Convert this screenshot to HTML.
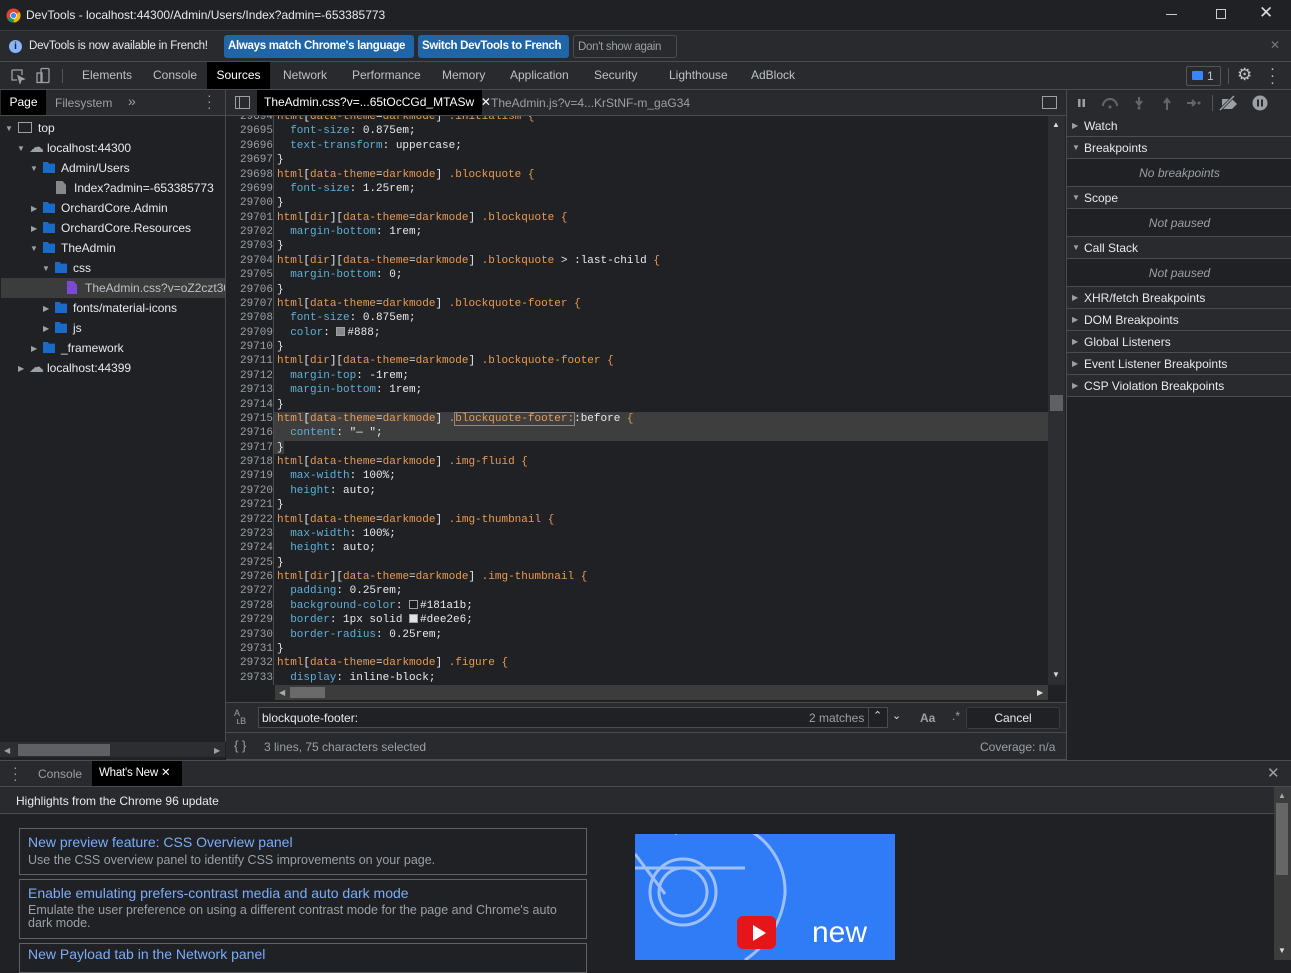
<!DOCTYPE html>
<html><head><meta charset="utf-8"><style>
*{box-sizing:border-box;margin:0;padding:0}
body{width:1291px;height:960px;overflow:hidden;background:#202124;font-family:"Liberation Sans",sans-serif;font-size:12px;color:#e8eaed;position:relative;white-space:nowrap}
.a{position:absolute}
.title{left:0;top:0;width:1291px;height:31px;background:#202124;border-bottom:1px solid #3c3c3c}
.info{left:0;top:31px;width:1291px;height:31px;background:#292a2d;border-bottom:1px solid #494c50}
.btn{position:absolute;top:4px;height:23px;line-height:23px;padding:0 4px;border-radius:3px;font-size:11.5px;letter-spacing:-0.3px;white-space:nowrap;overflow:hidden}
.tabs{left:0;top:62px;width:1291px;height:28px;background:#292a2d;border-bottom:1px solid #494c50}
.tabs span{position:absolute;top:0;height:27px;line-height:27px;color:#bdc1c6}
.sub{top:90px;height:26px;background:#292a2d;border-bottom:1px solid #494c50}
.tree{left:0;top:116px;width:226px;height:626px;background:#202124;border-right:1px solid #494c50}
.tr{position:absolute;height:20px;line-height:20px;font-size:12px;white-space:nowrap}
.fold{display:inline-block;width:12px;height:11px;background:#1a6bc6;vertical-align:-1px;margin-right:6px;clip-path:polygon(0 0,40% 0,50% 15%,100% 15%,100% 100%,0 100%)}
.ar{position:absolute;font-size:8px;color:#9aa0a6}
.code{left:226px;top:116px;width:822px;height:569px;overflow:hidden;background:#202124}
.ln{position:absolute;left:0;width:47px;text-align:right;color:#9aa0a6;font:11px/14.38px "Liberation Mono",monospace}
.cl{position:absolute;left:51px;white-space:pre;font:11px/14.38px "Liberation Mono",monospace;color:#e8eaed}
.o{color:#e99a52}.p{color:#5db0d7}
.sw{display:inline-block;width:9px;height:9px;border:1px solid #9aa0a6;vertical-align:-1px;margin-right:2px}
.rp{left:1066px;top:116px;width:225px;height:644px;background:#202124;border-left:1px solid #494c50}
.sec{position:absolute;left:0;width:225px;height:22px;line-height:22px;background:#292a2d;border-bottom:1px solid #494c50;padding-left:17px;font-size:12px}
.sec i{position:absolute;left:5px;font-style:normal;font-size:8px;color:#9aa0a6}
.emp{position:absolute;left:0;width:225px;height:28px;line-height:28px;text-align:center;font-style:italic;color:#9aa0a6;border-bottom:1px solid #494c50}
.card{position:absolute;left:19px;width:568px;border:1px solid #5f6368;padding:5px 8px;white-space:normal;overflow:hidden}
.card b{display:block;font-weight:normal;color:#7cacf8;font-size:14px;line-height:17px}
.card p{color:#9aa0a6;font-size:12.5px;line-height:11px;margin-top:3px}
</style></head><body>
<div class="a title">
<svg class="a" style="left:6px;top:8px" width="15" height="15" viewBox="0 0 16 16"><circle cx="8" cy="8" r="7.5" fill="#db4437"/><path d="M8 8 L1.5 11.7 A7.5 7.5 0 0 0 8.3 15.5Z" fill="#0f9d58"/><path d="M8 8 L8.3 15.5 A7.5 7.5 0 0 0 14.5 4.2Z" fill="#f4b400"/><circle cx="8" cy="8" r="3.6" fill="#fff"/><circle cx="8" cy="8" r="2.8" fill="#4285f4"/></svg>
<div class="a" style="left:26px;top:8px;font-size:12px;color:#e8eaed">DevTools - localhost:44300/Admin/Users/Index?admin=-653385773</div>
<div class="a" style="left:1166px;top:14px;width:11px;height:1px;background:#ccc"></div>
<div class="a" style="left:1216px;top:9px;width:10px;height:10px;border:1px solid #ccc"></div>
<div class="a" style="left:1259px;top:3px;font-size:17px;color:#ddd">✕</div>
</div>
<div class="a info">
<div class="a" style="left:9px;top:9px;width:13px;height:13px;border-radius:50%;background:#8ab4f8;color:#202124;font-size:10px;font-weight:bold;text-align:center;line-height:13px">i</div>
<div class="a" style="left:29px;top:9px;font-size:11.5px;letter-spacing:-0.2px">DevTools is now available in French!</div>
<div class="btn" style="left:224px;background:#2065a8;color:#fff;font-weight:bold;width:190px">Always match Chrome's language</div>
<div class="btn" style="left:418px;background:#2065a8;color:#fff;font-weight:bold;width:151px">Switch DevTools to French</div>
<div class="btn" style="left:573px;border:1px solid #4a4c50;color:#9aa0a6;width:104px">Don't show again</div>
<div class="a" style="left:1270px;top:7px;color:#777;font-size:12px">✕</div>
</div>
<div class="a tabs">
<svg class="a" style="left:10px;top:6px" width="16" height="16" viewBox="0 0 16 16" fill="none" stroke="#9aa0a6" stroke-width="1.3"><path d="M2 2h10v5M2 2v10h5"/><path d="M8 8l6 3-3 1-1 3z" fill="#9aa0a6"/></svg>
<svg class="a" style="left:35px;top:5px" width="16" height="17" viewBox="0 0 16 17" fill="none" stroke="#9aa0a6" stroke-width="1.3"><rect x="6" y="1.5" width="8" height="14" rx="1"/><rect x="2" y="6" width="5" height="9.5"/></svg>
<div class="a" style="left:62px;top:7px;width:1px;height:14px;background:#555"></div>
<span style="left:82px">Elements</span><span style="left:153px">Console</span>
<span style="left:207px;width:63px;background:#000;color:#fff;text-align:center">Sources</span>
<span style="left:283px">Network</span><span style="left:352px">Performance</span><span style="left:442px">Memory</span><span style="left:510px">Application</span><span style="left:594px">Security</span><span style="left:669px">Lighthouse</span><span style="left:751px">AdBlock</span>
<div class="a" style="left:1186px;top:4px;width:35px;height:20px;border:1px solid #555;border-radius:2px"></div>
<div class="a" style="left:1192px;top:9px;width:11px;height:9px;background:#3a85ff;border-radius:1px"></div>
<div class="a" style="left:1207px;top:7px;color:#bdc1c6">1</div>
<div class="a" style="left:1228px;top:6px;width:1px;height:16px;background:#555"></div>
<div class="a" style="left:1237px;top:3px;font-size:17px;color:#bdc1c6">⚙</div>
<div class="a" style="left:1270px;top:3px;font-size:15px;color:#bdc1c6;line-height:7px">·<br>·<br>·</div>
</div>
<!-- left subtabs -->
<div class="a sub" style="left:0;width:226px;border-right:1px solid #494c50">
<div class="a" style="left:1px;top:0;width:45px;height:25px;background:#000;line-height:25px;text-align:center;color:#fff">Page</div>
<div class="a" style="left:55px;top:6px;color:#9aa0a6">Filesystem</div>
<div class="a" style="left:128px;top:3px;color:#9aa0a6;font-size:14px">»</div>
<div class="a" style="left:207px;top:2px;color:#9aa0a6;font-size:14px;line-height:6px">·<br>·<br>·</div>
</div>
<div class="a sub" style="left:226px;width:840px">
<div class="a" style="left:9px;top:6px;width:15px;height:13px;border:1px solid #9aa0a6"></div><div class="a" style="left:13px;top:6px;width:1px;height:13px;background:#9aa0a6"></div>
<div class="a" style="left:31px;top:0;width:225px;height:25px;background:#000;line-height:25px;padding-left:7px;color:#fff">TheAdmin.css?v=...65tOcCGd_MTASw &nbsp;✕</div>
<div class="a" style="left:265px;top:6px;color:#9aa0a6">TheAdmin.js?v=4...KrStNF-m_gaG34</div>
<div class="a" style="left:816px;top:6px;width:15px;height:13px;border:1px solid #9aa0a6"></div>
</div>
<div class="a sub" style="left:1066px;width:225px;border-left:1px solid #494c50">
<svg class="a" style="left:8px;top:5px" width="200" height="16" viewBox="0 0 200 16">
<rect x="3" y="4" width="2.5" height="8" fill="#9aa0a6"/><rect x="7.5" y="4" width="2.5" height="8" fill="#9aa0a6"/>
<path d="M28 11 A7 7 0 0 1 42 11" stroke="#666" stroke-width="2" fill="none"/><circle cx="35" cy="12" r="1.5" fill="#666"/>
<path d="M64 2v7M61 6l3 4 3-4" stroke="#666" stroke-width="2" fill="none"/><circle cx="64" cy="13" r="1.5" fill="#666"/>
<path d="M92 13V6M89 8l3-4 3 4" stroke="#666" stroke-width="2" fill="none"/><circle cx="92" cy="14" r="1.2" fill="#666"/>
<path d="M112 8h8M117 5l3 3-3 3" stroke="#666" stroke-width="2" fill="none"/><circle cx="124" cy="8" r="1.5" fill="#666"/>
<rect x="137" y="0" width="1" height="16" fill="#555"/>
<path d="M147 4h10l5 5-5 5h-10z" fill="#9aa0a6"/><path d="M145 15l14-14" stroke="#292a2d" stroke-width="3"/><path d="M145 15l14-14" stroke="#9aa0a6" stroke-width="1.5"/>
<circle cx="185" cy="8" r="7.5" fill="#9aa0a6"/><rect x="182" y="4.5" width="2" height="7" fill="#292a2d"/><rect x="186" y="4.5" width="2" height="7" fill="#292a2d"/>
</svg>
</div>
<!-- tree -->
<div class="a tree">
<span class="ar" style="left:5px;top:8px">▼</span><div class="tr" style="left:18px;top:2px"><span style="display:inline-block;width:14px;height:11px;border:1.5px solid #9aa0a6;vertical-align:-1px;margin-right:6px"></span>top</div>
<span class="ar" style="left:17px;top:28px">▼</span><div class="tr" style="left:29px;top:22px"><span style="color:#9aa0a6;font-size:15px;margin-right:3px">☁</span>localhost:44300</div>
<span class="ar" style="left:30px;top:48px">▼</span><div class="tr" style="left:43px;top:42px"><span class="fold"></span>Admin/Users</div>
<div class="tr" style="left:56px;top:62px"><span style="display:inline-block;width:10px;height:13px;background:#888;vertical-align:-2px;margin-right:8px;clip-path:polygon(0 0,65% 0,100% 30%,100% 100%,0 100%)"></span>Index?admin=-653385773</div>
<span class="ar" style="left:31px;top:88px">▶</span><div class="tr" style="left:43px;top:82px"><span class="fold"></span>OrchardCore.Admin</div>
<span class="ar" style="left:31px;top:108px">▶</span><div class="tr" style="left:43px;top:102px"><span class="fold"></span>OrchardCore.Resources</div>
<span class="ar" style="left:30px;top:128px">▼</span><div class="tr" style="left:43px;top:122px"><span class="fold"></span>TheAdmin</div>
<span class="ar" style="left:42px;top:148px">▼</span><div class="tr" style="left:55px;top:142px"><span class="fold"></span>css</div>
<div class="a" style="left:1px;top:162px;width:224px;height:20px;background:#3c3c3c"></div>
<div class="tr" style="left:67px;top:162px;color:#bdc1c6;width:158px;overflow:hidden"><span style="display:inline-block;width:10px;height:13px;background:#7a4bd0;vertical-align:-2px;margin-right:8px;clip-path:polygon(0 0,65% 0,100% 30%,100% 100%,0 100%)"></span>TheAdmin.css?v=oZ2czt30</div>
<span class="ar" style="left:43px;top:188px">▶</span><div class="tr" style="left:55px;top:182px"><span class="fold"></span>fonts/material-icons</div>
<span class="ar" style="left:43px;top:208px">▶</span><div class="tr" style="left:55px;top:202px"><span class="fold"></span>js</div>
<span class="ar" style="left:31px;top:228px">▶</span><div class="tr" style="left:43px;top:222px"><span class="fold"></span>_framework</div>
<span class="ar" style="left:18px;top:248px">▶</span><div class="tr" style="left:29px;top:242px"><span style="color:#9aa0a6;font-size:15px;margin-right:3px">☁</span>localhost:44399</div>
<div class="a" style="left:0;top:626px;width:225px;height:15px;background:#2d2e31"></div>
<div class="a" style="left:18px;top:628px;width:92px;height:12px;background:#5f6063"></div>
<span class="ar" style="left:4px;top:630px">◀</span><span class="ar" style="left:214px;top:630px">▶</span>
</div>
<!-- code -->
<div class="a code">
<div class="a" style="left:0;top:0;width:48px;height:569px;border-right:1px solid #494c50"></div>
<div class="a" style="left:48px;top:296px;width:774px;height:29px;background:#3e3e3e"></div>
<div class="a" style="left:48px;top:324px;width:10px;height:14px;background:#3e3e3e"></div>
<div class="a" style="left:0;top:-6px;width:822px">
<div class="ln" style="top:0">29694<br>29695<br>29696<br>29697<br>29698<br>29699<br>29700<br>29701<br>29702<br>29703<br>29704<br>29705<br>29706<br>29707<br>29708<br>29709<br>29710<br>29711<br>29712<br>29713<br>29714<br>29715<br>29716<br>29717<br>29718<br>29719<br>29720<br>29721<br>29722<br>29723<br>29724<br>29725<br>29726<br>29727<br>29728<br>29729<br>29730<br>29731<br>29732<br>29733<br>29734</div>
<div class="cl" style="top:0"><span class="o">html</span>[<span class="o">data-theme</span>=<span class="o">darkmode</span>] <span class="o">.initialism</span> <span class="o">{</span>
  <span class="p">font-size</span>: 0.875em;
  <span class="p">text-transform</span>: uppercase;
}
<span class="o">html</span>[<span class="o">data-theme</span>=<span class="o">darkmode</span>] <span class="o">.blockquote</span> <span class="o">{</span>
  <span class="p">font-size</span>: 1.25rem;
}
<span class="o">html</span>[<span class="o">dir</span>][<span class="o">data-theme</span>=<span class="o">darkmode</span>] <span class="o">.blockquote</span> <span class="o">{</span>
  <span class="p">margin-bottom</span>: 1rem;
}
<span class="o">html</span>[<span class="o">dir</span>][<span class="o">data-theme</span>=<span class="o">darkmode</span>] <span class="o">.blockquote</span> &gt; :last-child <span class="o">{</span>
  <span class="p">margin-bottom</span>: 0;
}
<span class="o">html</span>[<span class="o">data-theme</span>=<span class="o">darkmode</span>] <span class="o">.blockquote-footer</span> <span class="o">{</span>
  <span class="p">font-size</span>: 0.875em;
  <span class="p">color</span>: <span class="sw" style="background:#888"></span>#888;
}
<span class="o">html</span>[<span class="o">dir</span>][<span class="o">data-theme</span>=<span class="o">darkmode</span>] <span class="o">.blockquote-footer</span> <span class="o">{</span>
  <span class="p">margin-top</span>: -1rem;
  <span class="p">margin-bottom</span>: 1rem;
}
<span class="o">html</span>[<span class="o">data-theme</span>=<span class="o">darkmode</span>] <span class="o">.<span style="outline:1px solid #888">blockquote-footer:</span></span>:before <span class="o">{</span>
  <span class="p">content</span>: "— ";
}
<span class="o">html</span>[<span class="o">data-theme</span>=<span class="o">darkmode</span>] <span class="o">.img-fluid</span> <span class="o">{</span>
  <span class="p">max-width</span>: 100%;
  <span class="p">height</span>: auto;
}
<span class="o">html</span>[<span class="o">data-theme</span>=<span class="o">darkmode</span>] <span class="o">.img-thumbnail</span> <span class="o">{</span>
  <span class="p">max-width</span>: 100%;
  <span class="p">height</span>: auto;
}
<span class="o">html</span>[<span class="o">dir</span>][<span class="o">data-theme</span>=<span class="o">darkmode</span>] <span class="o">.img-thumbnail</span> <span class="o">{</span>
  <span class="p">padding</span>: 0.25rem;
  <span class="p">background-color</span>: <span class="sw" style="background:#181a1b"></span>#181a1b;
  <span class="p">border</span>: 1px solid <span class="sw" style="background:#dee2e6"></span>#dee2e6;
  <span class="p">border-radius</span>: 0.25rem;
}
<span class="o">html</span>[<span class="o">data-theme</span>=<span class="o">darkmode</span>] <span class="o">.figure</span> <span class="o">{</span>
  <span class="p">display</span>: inline-block;
</div>
</div>
</div>
<!-- vertical scrollbar -->
<div class="a" style="left:1048px;top:116px;width:17px;height:569px;background:#2d2e31"></div>
<div class="a" style="left:1050px;top:395px;width:13px;height:16px;background:#5f6063"></div>
<div class="a" style="left:1052px;top:120px;font-size:8px;color:#ddd">▲</div>
<div class="a" style="left:1052px;top:670px;font-size:8px;color:#ddd">▼</div>
<!-- h scrollbar -->
<div class="a" style="left:275px;top:685px;width:773px;height:15px;background:#3c3c3c"></div>
<div class="a" style="left:290px;top:687px;width:35px;height:11px;background:#6a6a6a"></div>
<div class="a" style="left:279px;top:688px;font-size:8px;color:#aaa">◀</div>
<div class="a" style="left:1037px;top:688px;font-size:8px;color:#ddd">▶</div>
<!-- search bar -->
<div class="a" style="left:226px;top:702px;width:840px;height:31px;background:#292a2d;border-top:1px solid #494c50;border-bottom:1px solid #494c50">
<div class="a" style="left:8px;top:6px;font-size:9px;color:#9aa0a6;line-height:8px">A<br>&nbsp;ʟB</div>
<div class="a" style="left:32px;top:4px;width:630px;height:21px;background:#202124;border:1px solid #494c50"></div>
<div class="a" style="left:36px;top:8px;color:#e8eaed">blockquote-footer:</div>
<div class="a" style="left:583px;top:8px;color:#9aa0a6">2 matches</div>
<div class="a" style="left:642px;top:4px;width:1px;height:21px;background:#494c50"></div>
<div class="a" style="left:661px;top:4px;width:1px;height:21px;background:#494c50"></div>
<div class="a" style="left:647px;top:6px;color:#ddd;font-size:11px">⌃</div>
<div class="a" style="left:666px;top:6px;color:#ddd;font-size:11px">⌄</div>
<div class="a" style="left:694px;top:8px;color:#9aa0a6;font-weight:bold">Aa</div>
<div class="a" style="left:726px;top:6px;color:#9aa0a6">.*</div>
<div class="a" style="left:740px;top:4px;width:94px;height:22px;border:1px solid #3c3c3c;border-radius:3px;background:#202124;text-align:center;line-height:20px">Cancel</div>
</div>
<div class="a" style="left:226px;top:733px;width:840px;height:27px;background:#292a2d;border-bottom:1px solid #494c50">
<div class="a" style="left:8px;top:5px;color:#9aa0a6;font-size:13px">{ }</div>
<div class="a" style="left:38px;top:7px;color:#9aa0a6">3 lines, 75 characters selected</div>
<div class="a" style="left:754px;top:7px;color:#9aa0a6">Coverage: n/a</div>
</div>
<!-- right panel -->
<div class="a rp">
<div class="sec" style="top:-1px"><i>▶</i>Watch</div>
<div class="sec" style="top:21px"><i>▼</i>Breakpoints</div>
<div class="emp" style="top:43px">No breakpoints</div>
<div class="sec" style="top:71px"><i>▼</i>Scope</div>
<div class="emp" style="top:93px">Not paused</div>
<div class="sec" style="top:121px"><i>▼</i>Call Stack</div>
<div class="emp" style="top:143px">Not paused</div>
<div class="sec" style="top:171px"><i>▶</i>XHR/fetch Breakpoints</div>
<div class="sec" style="top:193px"><i>▶</i>DOM Breakpoints</div>
<div class="sec" style="top:215px"><i>▶</i>Global Listeners</div>
<div class="sec" style="top:237px"><i>▶</i>Event Listener Breakpoints</div>
<div class="sec" style="top:259px"><i>▶</i>CSP Violation Breakpoints</div>
</div>
<!-- drawer -->
<div class="a" style="left:0;top:760px;width:1291px;height:27px;background:#292a2d;border-bottom:1px solid #494c50;border-top:1px solid #494c50">
<div class="a" style="left:13px;top:3px;color:#9aa0a6;font-size:14px;line-height:6px">·<br>·<br>·</div>
<div class="a" style="left:38px;top:6px;color:#9aa0a6">Console</div>
<div class="a" style="left:92px;top:0;width:90px;height:25px;background:#000;line-height:25px;padding-left:7px;color:#fff;white-space:nowrap;font-size:11.5px;letter-spacing:-0.2px">What's New ✕</div>
<div class="a" style="left:1267px;top:3px;color:#9aa0a6;font-size:15px">✕</div>
</div>
<div class="a" style="left:0;top:787px;width:1274px;height:27px;background:#292a2d;border-bottom:1px solid #494c50">
<div class="a" style="left:16px;top:7px;color:#e8eaed">Highlights from the Chrome 96 update</div>
</div>
<div class="a" style="left:1274px;top:787px;width:17px;height:173px;background:#3c3c3c"></div>
<div class="a" style="left:1276px;top:803px;width:12px;height:72px;background:#666"></div>
<div class="a" style="left:1278px;top:791px;font-size:8px;color:#aaa">▲</div>
<div class="a" style="left:1278px;top:946px;font-size:8px;color:#ddd">▼</div>
<div class="card" style="top:828px;height:47px"><b>New preview feature: CSS Overview panel</b><p style="line-height:15px;margin-top:2px">Use the CSS overview panel to identify CSS improvements on your page.</p></div>
<div class="card" style="top:879px;height:60px"><b>Enable emulating prefers-contrast media and auto dark mode</b><p style="line-height:13px;margin-top:2px">Emulate the user preference on using a different contrast mode for the page and Chrome's auto dark mode.</p></div>
<div class="card" style="top:943px;height:30px;padding-top:2px"><b>New Payload tab in the Network panel</b></div>
<div class="a" style="left:635px;top:834px;width:260px;height:126px;background:#2f7cf6;overflow:hidden">
<svg width="260" height="126" viewBox="0 0 260 126" fill="none" stroke="#a9c8fb" stroke-width="3" opacity=".9"><circle cx="48" cy="58" r="33"/><circle cx="48" cy="58" r="24"/><path d="M0 34 H110 M40 0 A70 70 0 0 1 150 60 A90 90 0 0 1 110 126"/><path d="M0 20 L30 60" /></svg>
<div class="a" style="left:102px;top:82px;width:39px;height:33px;background:#e5151a;border-radius:6px"></div>
<div class="a" style="left:118px;top:91px;width:0;height:0;border-left:13px solid #fff;border-top:8px solid transparent;border-bottom:8px solid transparent"></div>
<div class="a" style="left:177px;top:82px;font-size:30px;color:#fff">new</div>
</div>
</body></html>
